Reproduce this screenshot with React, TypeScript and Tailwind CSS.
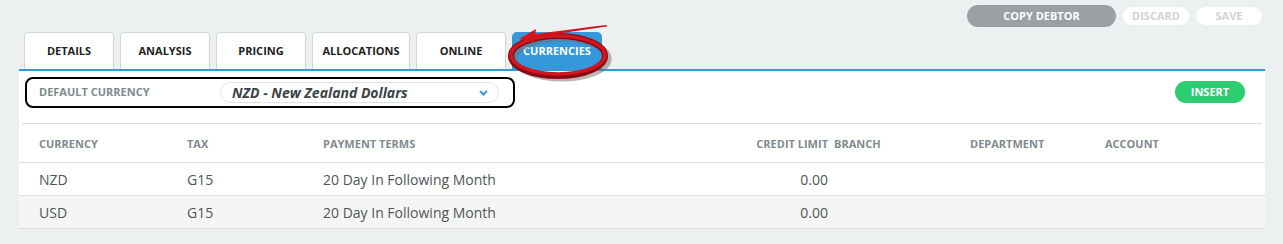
import React from 'react';

const TABS = [
  { id: 'details', label: 'DETAILS', width: 'w-[90px]' },
  { id: 'analysis', label: 'ANALYSIS', width: 'w-[90px]' },
  { id: 'pricing', label: 'PRICING', width: 'w-[90px]' },
  { id: 'allocations', label: 'ALLOCATIONS', width: 'w-[98px]' },
  { id: 'online', label: 'ONLINE', width: 'w-[90px]' },
  { id: 'currencies', label: 'CURRENCIES', width: 'w-[90px]' },
];

const ROWS = [
  { currency: 'NZD', tax: 'G15', terms: '20 Day In Following Month', limit: '0.00' },
  { currency: 'USD', tax: 'G15', terms: '20 Day In Following Month', limit: '0.00' },
];

const GRID = 'grid grid-cols-[148px_136px_417px_88px_142px_135px_1fr] pl-[20px] items-center';

// Red hand-drawn annotation circling the active tab
function Annotation() {
  return (
    <svg
      className="pointer-events-none absolute left-[500px] top-[20px]"
      width="120"
      height="64"
      viewBox="0 0 120 64"
    >
      <ellipse cx="62" cy="39" rx="47" ry="20" fill="none" stroke="#6f6f6f" strokeOpacity="0.5" strokeWidth="5" />
      <ellipse cx="58" cy="36" rx="47" ry="20" fill="none" stroke="#8a0810" strokeWidth="6" />
      <ellipse cx="58" cy="35" rx="47" ry="19" fill="none" stroke="#d3151d" strokeWidth="3.5" />
      <path d="M107 5 C 88 7, 60 11, 32 14.5 L 31 17.5 C 60 13.5, 88 9, 107 6.5 Z" fill="#d3151d" />
      <path d="M19 19 L 36 9 L 34 22 Z" fill="#d3151d" />
    </svg>
  );
}

export default function App() {
  return (
    <div
      className="relative h-[244px] w-full bg-[#ecf0f1] pl-[19px] pr-[18px]"
      style={{ fontFamily: '"Open Sans", "Noto Sans", sans-serif' }}
    >
      {/* Top actions */}
      <div className="flex justify-end items-center gap-[7px] pt-[5px] pr-[3px] h-[27px]">
        <button className="h-[22px] w-[149px] rounded-full bg-[#9aa0a3] text-[11px] font-bold text-white">
          COPY DEBTOR
        </button>
        <button className="h-[18px] w-[66px] rounded-full bg-white text-[11px] font-bold text-[#cfd3d5]">
          DISCARD
        </button>
        <button className="h-[18px] w-[66px] rounded-full bg-white text-[11px] font-bold text-[#cfd3d5]">
          SAVE
        </button>
      </div>

      {/* Tabs */}
      <div className="mt-[5px] flex gap-[6px] pl-[5px]">
        {TABS.map(tab => (
          <div
            key={tab.id}
            className={`flex h-[37px] items-center justify-center rounded-t-[5px] pt-[1px] text-[11px] font-bold ${tab.width} ${
              tab.id === 'currencies'
                ? 'bg-[#3498db] text-white'
                : 'border border-b-0 border-[#cfd4d6] bg-white text-[#1e1e1e]'
            }`}
          >
            {tab.label}
          </div>
        ))}
      </div>

      {/* Panel */}
      <div className="rounded-b-[4px] border-t-2 border-[#3498db] bg-white">
        <div className="flex items-start justify-between pl-[6px] pr-[20px] pt-[6px] pb-[15px]">
          <div className="flex h-[31px] w-[490px] items-center rounded-[8px] border-2 border-black pl-[12px] pr-[14px]">
            <span className="w-[181px] text-[11px] font-bold text-[#7f8a8f]">DEFAULT CURRENCY</span>
            <div className="flex h-[21px] flex-1 items-center justify-between rounded-full border border-[#dfe3e5] pl-[11px] pr-[10px]">
              <span className="text-[14px] font-bold italic text-[#3b4347]">NZD - New Zealand Dollars</span>
              <svg width="9" height="6" viewBox="0 0 9 6">
                <path d="M1 1 L4.5 4.5 L8 1" fill="none" stroke="#3498db" strokeWidth="2" />
              </svg>
            </div>
          </div>
          <button className="mt-[4px] h-[22px] w-[70px] rounded-full bg-[#2ecc71] text-[11px] font-bold text-white">
            INSERT
          </button>
        </div>

        <div className="mx-[3px] border-t border-[#dddddd]" />

        <div className={`${GRID} h-[39px] border-b border-[#dddddd] pt-[2px] text-[11px] font-bold text-[#7f8a8f]`}>
          <span>CURRENCY</span>
          <span>TAX</span>
          <span>PAYMENT TERMS</span>
          <span className="text-right">CREDIT LIMIT</span>
          <span className="pl-[6px]">BRANCH</span>
          <span>DEPARTMENT</span>
          <span>ACCOUNT</span>
        </div>

        {ROWS.map((row, index) => (
          <div
            key={row.currency}
            className={`${GRID} h-[33px] border-b border-[#dddddd] text-[14px] text-[#4f5558] ${
              index % 2 === 1 ? 'bg-[#f5f5f5]' : 'bg-white'
            }`}
          >
            <span>{row.currency}</span>
            <span>{row.tax}</span>
            <span>{row.terms}</span>
            <span className="text-right">{row.limit}</span>
            <span />
            <span />
            <span />
          </div>
        ))}
      </div>

      <Annotation />
    </div>
  );
}
